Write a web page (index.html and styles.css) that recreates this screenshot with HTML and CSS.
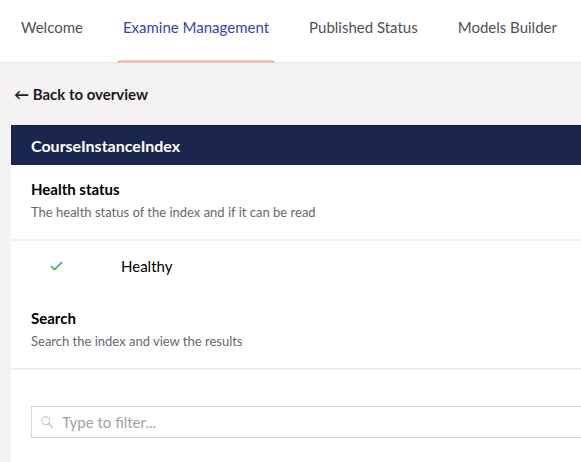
FILE: index.html
```html
<!DOCTYPE html>
<html lang="en">
<head>
<meta charset="utf-8">
<title>Examine Management</title>
<link rel="stylesheet" href="styles.css">
</head>
<body>
  <nav class="tabs">
    <a class="tab">Welcome</a>
    <a class="tab tab--active">Examine Management</a>
    <a class="tab">Published Status</a>
    <a class="tab">Models Builder</a>
  </nav>

  <main class="content">
    <a class="back-link">&larr; Back to overview</a>

    <section class="card">
      <header class="card__header">CourseInstanceIndex</header>

      <div class="group">
        <div class="group__head">
          <h3 class="group__title">Health status</h3>
          <p class="group__desc">The health status of the index and if it can be read</p>
        </div>
        <div class="status-row">
          <svg class="status-row__icon" viewBox="0 0 14 10" width="14" height="10" aria-hidden="true">
            <path d="M1 5.2 L4.9 8.8 L13 0.9" fill="none" stroke="currentColor" stroke-width="1.8"/>
          </svg>
          <span class="status-row__label">Healthy</span>
        </div>
      </div>

      <div class="group">
        <div class="group__head">
          <h3 class="group__title">Search</h3>
          <p class="group__desc">Search the index and view the results</p>
        </div>
        <div class="search-area">
          <label class="filter">
            <svg class="filter__icon" viewBox="0 0 12 12" width="12" height="12" aria-hidden="true">
              <circle cx="4.8" cy="4.8" r="3.9" fill="none" stroke="currentColor" stroke-width="1.1"/>
              <path d="M7.6 7.6 L11.2 11.2" stroke="currentColor" stroke-width="1.6" stroke-linecap="round"/>
            </svg>
            <input class="filter__input" type="text" placeholder="Type to filter...">
          </label>
        </div>
      </div>
    </section>
  </main>
</body>
</html>
```

FILE: styles.css
```css
html {
  overflow: hidden;
}

body {
  margin: 0;
  font-family: Lato, "Open Sans", sans-serif;
  background: #f4f2f2;
  color: #1b1b1b;
  -webkit-font-smoothing: antialiased;
}

/* top tab navigation */
.tabs {
  display: flex;
  height: 62px;
  padding-left: 1px;
  background: #fff;
  border-bottom: 1px solid #e9e9eb;
}

.tab {
  position: relative;
  display: flex;
  align-items: center;
  padding: 0 20px 8px;
  font-size: 15px;
  color: #515054;
  white-space: nowrap;
  cursor: pointer;
}

.tab--active {
  color: #3544b1;
}

.tab--active::after {
  content: "";
  position: absolute;
  left: 14px;
  right: 14px;
  bottom: -1px;
  height: 3px;
  background: #f5c1bc;
  border-radius: 3px 3px 0 0;
}

/* main content area */
.content {
  padding: 21px 0 0 11px;
}

.back-link {
  display: block;
  padding-left: 3px;
  font-size: 15px;
  font-weight: 700;
  line-height: 20px;
  color: #1b1b1b;
  cursor: pointer;
}

.card {
  width: 900px;
  margin-top: 21px;
  background: #fff;
}

.card__header {
  height: 40px;
  display: flex;
  align-items: center;
  padding: 0 20px;
  background: #1b264f;
  color: #fff;
  font-size: 16px;
  font-weight: 700;
}

.group__head {
  padding: 14px 20px 17px;
  border-bottom: 2px solid #f0eff0;
}

.group__title {
  margin: 0;
  font-size: 15px;
  font-weight: 700;
  line-height: 20px;
  color: #000;
}

.group__desc {
  margin: 3px 0 0;
  font-size: 13px;
  line-height: 20px;
  color: #68676b;
}

.status-row {
  display: flex;
  align-items: center;
  height: 50px;
  padding-left: 39px;
  padding-bottom: 3px;
}

.status-row__icon {
  color: #4caf50;
  width: 13px;
  height: 10px;
}

.status-row__label {
  margin-left: 58px;
  font-size: 15px;
  color: #000;
}

.search-area {
  padding: 36px 20px 30px;
}

.filter {
  display: flex;
  align-items: center;
  height: 30px;
  border: 1px solid #d8d7d9;
  background: #fff;
}

.filter__icon {
  margin-left: 9px;
  color: #c6c5c8;
}

.filter__input {
  flex: 1;
  margin-left: 9px;
  border: 0;
  outline: 0;
  padding: 0;
  font-family: inherit;
  font-size: 15px;
  color: #1b1b1b;
  background: transparent;
}

.filter__input::placeholder {
  color: #a2a1a6;
}
```
